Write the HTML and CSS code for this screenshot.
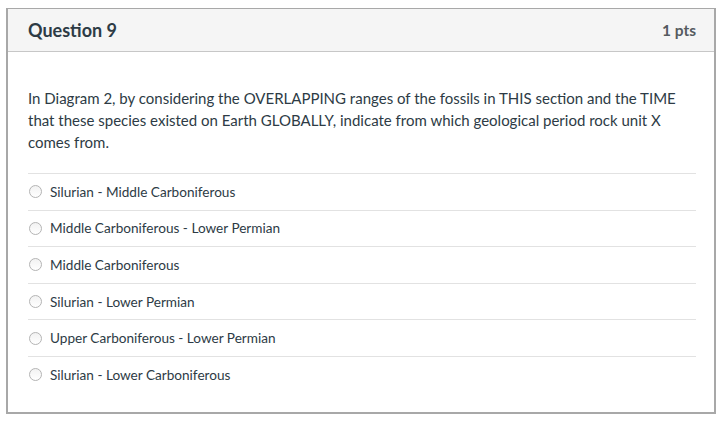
FILE: index.html
```html
<!DOCTYPE html>
<html>
<head>
<meta charset="utf-8">
<link rel="stylesheet" href="styles.css">
</head>
<body>
<div class="question">
  <div class="q-header">
    <span class="q-title">Question 9</span>
    <span class="q-pts">1 pts</span>
  </div>
  <div class="q-body">
    <p class="q-text">In Diagram 2, by considering the OVERLAPPING ranges of the fossils in THIS section and the TIME that these species existed on Earth GLOBALLY, indicate from which geological period rock unit X comes from.</p>
    <div class="answers">
      <label class="answer"><span class="radio"></span><span>Silurian - Middle Carboniferous</span></label>
      <label class="answer"><span class="radio"></span><span>Middle Carboniferous - Lower Permian</span></label>
      <label class="answer"><span class="radio"></span><span>Middle Carboniferous</span></label>
      <label class="answer"><span class="radio"></span><span>Silurian - Lower Permian</span></label>
      <label class="answer"><span class="radio"></span><span>Upper Carboniferous - Lower Permian</span></label>
      <label class="answer"><span class="radio"></span><span>Silurian - Lower Carboniferous</span></label>
    </div>
  </div>
</div>
</body>
</html>
```
FILE: styles.css
```css
html, body {
  margin: 0;
  padding: 0;
  background: #fff;
}
body {
  font-family: Lato, "Open Sans", sans-serif;
  color: #2d3b45;
}
.question {
  margin: 8px 6px 0 6px;
  width: 706px;
  border: 2px solid #a8a8a8;
  border-top-width: 1px;
}
.q-header {
  display: flex;
  justify-content: space-between;
  align-items: center;
  height: 42px;
  padding: 0 18px 0 20px;
  background: #f5f5f5;
  border-bottom: 1px solid #c7c7c7;
}
.q-title {
  font-weight: 700;
  font-size: 18px;
}
.q-pts {
  font-weight: 700;
  font-size: 15.5px;
  color: #555b60;
}
.q-body {
  padding: 35px 18px 19px 20px;
}
.q-text {
  margin: 0;
  font-size: 15px;
  line-height: 22px;
}
.answers {
  margin-top: 20px;
}
.answer {
  display: flex;
  align-items: center;
  gap: 8px;
  height: 35.6px;
  border-top: 1px solid #e2e2e2;
  padding-left: 1px;
  font-size: 13.6px;
}
.radio {
  width: 11px;
  height: 11px;
  border: 1px solid #b4b4b4;
  border-radius: 50%;
  background: linear-gradient(#f2f2f2, #ffffff);
  flex: none;
}
```
